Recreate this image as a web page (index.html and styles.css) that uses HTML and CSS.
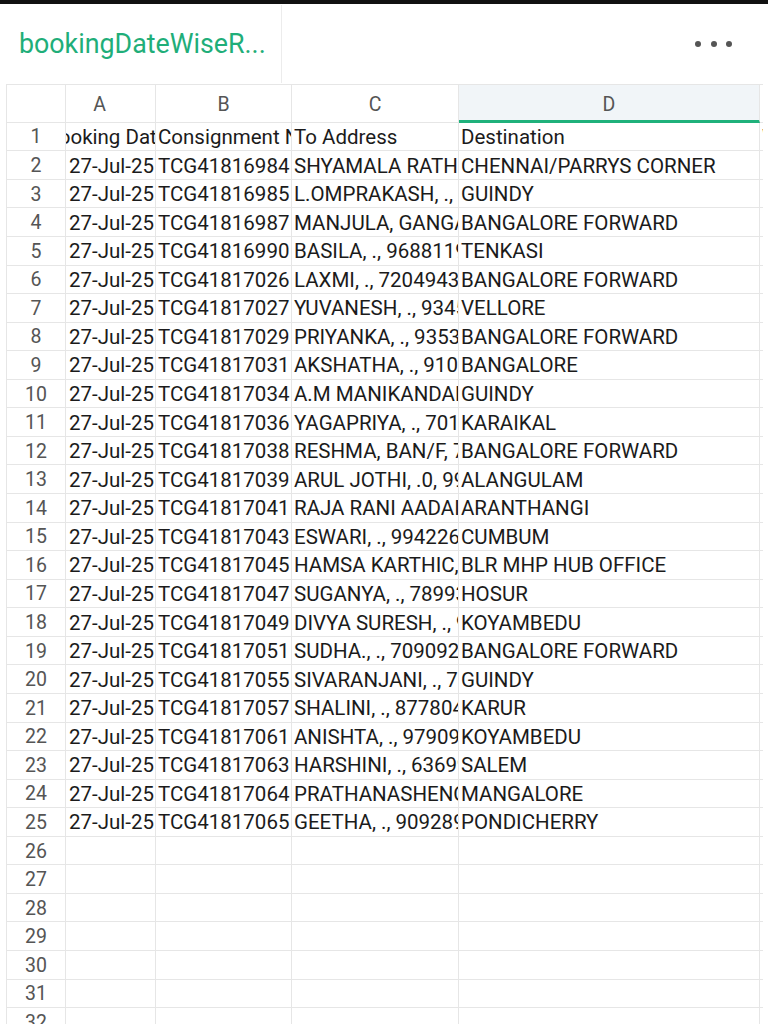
FILE: index.html
```html
<!DOCTYPE html>
<html>
<head>
<meta charset="utf-8">
<link rel="stylesheet" href="styles.css">
</head>
<body>
<div class="statusbar"></div>
<header class="appbar">
  <div class="title">bookingDateWiseR...</div>
  <div class="actions"><span class="dot"></span><span class="dot"></span><span class="dot"></span></div>
</header>
<div class="viewport">
  <div class="sheet">
    <div class="corner"></div>
    <div class="colhead cola">A</div>
    <div class="colhead">B</div>
    <div class="colhead">C</div>
    <div class="colhead active">D</div>
    <div class="colhead">E</div>

    <div class="rowhead">1</div><div class="cell scrolled"><span>Booking Date</span></div><div class="cell">Consignment No</div><div class="cell">To Address</div><div class="cell">Destination</div><div class="cell">Weight</div>
    <div class="rowhead">2</div><div class="cell date">27-Jul-25</div><div class="cell">TCG41816984</div><div class="cell">SHYAMALA RATHINAM</div><div class="cell">CHENNAI/PARRYS CORNER</div><div class="cell"></div>
    <div class="rowhead">3</div><div class="cell date">27-Jul-25</div><div class="cell">TCG41816985</div><div class="cell">L.OMPRAKASH, ., '9840</div><div class="cell">GUINDY</div><div class="cell"></div>
    <div class="rowhead">4</div><div class="cell date">27-Jul-25</div><div class="cell">TCG41816987</div><div class="cell">MANJULA, GANGA</div><div class="cell">BANGALORE FORWARD</div><div class="cell"></div>
    <div class="rowhead">5</div><div class="cell date">27-Jul-25</div><div class="cell">TCG41816990</div><div class="cell">BASILA, ., 96881193</div><div class="cell">TENKASI</div><div class="cell"></div>
    <div class="rowhead">6</div><div class="cell date">27-Jul-25</div><div class="cell">TCG41817026</div><div class="cell">LAXMI, ., 72049438</div><div class="cell">BANGALORE FORWARD</div><div class="cell"></div>
    <div class="rowhead">7</div><div class="cell date">27-Jul-25</div><div class="cell">TCG41817027</div><div class="cell">YUVANESH, ., 93450</div><div class="cell">VELLORE</div><div class="cell"></div>
    <div class="rowhead">8</div><div class="cell date">27-Jul-25</div><div class="cell">TCG41817029</div><div class="cell">PRIYANKA, ., 93530</div><div class="cell">BANGALORE FORWARD</div><div class="cell"></div>
    <div class="rowhead">9</div><div class="cell date">27-Jul-25</div><div class="cell">TCG41817031</div><div class="cell">AKSHATHA, ., 91083</div><div class="cell">BANGALORE</div><div class="cell"></div>
    <div class="rowhead">10</div><div class="cell date">27-Jul-25</div><div class="cell">TCG41817034</div><div class="cell">A.M MANIKANDAN</div><div class="cell">GUINDY</div><div class="cell"></div>
    <div class="rowhead">11</div><div class="cell date">27-Jul-25</div><div class="cell">TCG41817036</div><div class="cell">YAGAPRIYA, ., 70100</div><div class="cell">KARAIKAL</div><div class="cell"></div>
    <div class="rowhead">12</div><div class="cell date">27-Jul-25</div><div class="cell">TCG41817038</div><div class="cell">RESHMA, BAN/F, 7019</div><div class="cell">BANGALORE FORWARD</div><div class="cell"></div>
    <div class="rowhead">13</div><div class="cell date">27-Jul-25</div><div class="cell">TCG41817039</div><div class="cell">ARUL JOTHI, .0, 9944</div><div class="cell">ALANGULAM</div><div class="cell"></div>
    <div class="rowhead">14</div><div class="cell date">27-Jul-25</div><div class="cell">TCG41817041</div><div class="cell">RAJA RANI AADAIYAPPAN</div><div class="cell">ARANTHANGI</div><div class="cell"></div>
    <div class="rowhead">15</div><div class="cell date">27-Jul-25</div><div class="cell">TCG41817043</div><div class="cell">ESWARI, ., 99422671</div><div class="cell">CUMBUM</div><div class="cell"></div>
    <div class="rowhead">16</div><div class="cell date">27-Jul-25</div><div class="cell">TCG41817045</div><div class="cell">HAMSA KARTHIC, .</div><div class="cell">BLR MHP HUB OFFICE</div><div class="cell"></div>
    <div class="rowhead">17</div><div class="cell date">27-Jul-25</div><div class="cell">TCG41817047</div><div class="cell">SUGANYA, ., 78993</div><div class="cell">HOSUR</div><div class="cell"></div>
    <div class="rowhead">18</div><div class="cell date">27-Jul-25</div><div class="cell">TCG41817049</div><div class="cell">DIVYA SURESH, ., 9</div><div class="cell">KOYAMBEDU</div><div class="cell"></div>
    <div class="rowhead">19</div><div class="cell date">27-Jul-25</div><div class="cell">TCG41817051</div><div class="cell">SUDHA., ., 70909290</div><div class="cell">BANGALORE FORWARD</div><div class="cell"></div>
    <div class="rowhead">20</div><div class="cell date">27-Jul-25</div><div class="cell">TCG41817055</div><div class="cell">SIVARANJANI, ., 7092</div><div class="cell">GUINDY</div><div class="cell"></div>
    <div class="rowhead">21</div><div class="cell date">27-Jul-25</div><div class="cell">TCG41817057</div><div class="cell">SHALINI, ., 87780401</div><div class="cell">KARUR</div><div class="cell"></div>
    <div class="rowhead">22</div><div class="cell date">27-Jul-25</div><div class="cell">TCG41817061</div><div class="cell">ANISHTA, ., 97909012</div><div class="cell">KOYAMBEDU</div><div class="cell"></div>
    <div class="rowhead">23</div><div class="cell date">27-Jul-25</div><div class="cell">TCG41817063</div><div class="cell">HARSHINI, ., 63699</div><div class="cell">SALEM</div><div class="cell"></div>
    <div class="rowhead">24</div><div class="cell date">27-Jul-25</div><div class="cell">TCG41817064</div><div class="cell">PRATHANASHENOY</div><div class="cell">MANGALORE</div><div class="cell"></div>
    <div class="rowhead">25</div><div class="cell date">27-Jul-25</div><div class="cell">TCG41817065</div><div class="cell">GEETHA, ., 90928990</div><div class="cell">PONDICHERRY</div><div class="cell"></div>
    <div class="rowhead">26</div><div class="cell"></div><div class="cell"></div><div class="cell"></div><div class="cell"></div><div class="cell"></div>
    <div class="rowhead">27</div><div class="cell"></div><div class="cell"></div><div class="cell"></div><div class="cell"></div><div class="cell"></div>
    <div class="rowhead">28</div><div class="cell"></div><div class="cell"></div><div class="cell"></div><div class="cell"></div><div class="cell"></div>
    <div class="rowhead">29</div><div class="cell"></div><div class="cell"></div><div class="cell"></div><div class="cell"></div><div class="cell"></div>
    <div class="rowhead">30</div><div class="cell"></div><div class="cell"></div><div class="cell"></div><div class="cell"></div><div class="cell"></div>
    <div class="rowhead">31</div><div class="cell"></div><div class="cell"></div><div class="cell"></div><div class="cell"></div><div class="cell"></div>
    <div class="rowhead">32</div><div class="cell"></div><div class="cell"></div><div class="cell"></div><div class="cell"></div><div class="cell"></div>
  </div>
</div>
</body>
</html>
```

FILE: styles.css
```css
html, body {
  margin: 0;
  padding: 0;
  background: #ffffff;
  height: 1024px;
  overflow: hidden;
  font-family: Roboto, "Noto Sans", sans-serif;
}

.statusbar {
  height: 4px;
  background: #111111;
}

.appbar {
  height: 80px;
  display: flex;
  align-items: stretch;
}

.title {
  width: 282px;
  padding-left: 19px;
  box-sizing: border-box;
  border-right: 1px solid #ececec;
  margin-top: 1px;
  margin-bottom: 1px;
  display: flex;
  align-items: center;
  font-size: 26.8px;
  color: #1fae79;
  white-space: nowrap;
  overflow: hidden;
  padding-bottom: 1px;
}

.actions {
  flex: 1;
  display: flex;
  align-items: center;
  justify-content: flex-end;
  gap: 9.5px;
  padding-right: 36px;
}

.dot {
  width: 6px;
  height: 6px;
  border-radius: 50%;
  background: #555555;
}

.viewport {
  margin-left: 6px;
  width: 757px;
  overflow: hidden;
}

.sheet {
  display: grid;
  grid-template-columns: 59px 90px 136px 167px 301px 120px;
  grid-template-rows: 37.7px;
  grid-auto-rows: 28.57px;
  border-top: 1px solid #e6e6e6;
  border-left: 1px solid #e6e6e6;
  width: max-content;
}

.sheet > div {
  box-sizing: border-box;
  border-right: 1px solid #e6e6e6;
  border-bottom: 1px solid #e6e6e6;
  overflow: hidden;
  white-space: nowrap;
  display: flex;
  align-items: center;
}

.corner {
  background: #ffffff;
}

.colhead {
  justify-content: center;
  font-size: 19.5px;
  color: #555555;
  padding-top: 2px;
}

.colhead.cola {
  padding-right: 22px;
}

.colhead.active {
  background: #f1f5f8;
  border-bottom: 3px solid #1fb17b !important;
  padding-top: 4px;
}

.rowhead {
  justify-content: center;
  font-size: 19.5px;
  color: #555555;
  padding-top: 1px;
}

.cell {
  font-size: 20.5px;
  color: #1b1b1b;
  padding-left: 2px;
  padding-top: 1px;
}

.cell.date {
  justify-content: flex-end;
  padding-left: 0;
  padding-right: 1px;
}

.cell.scrolled {
  padding-left: 0;
}

.cell.scrolled span {
  margin-left: -20px;
}
```
